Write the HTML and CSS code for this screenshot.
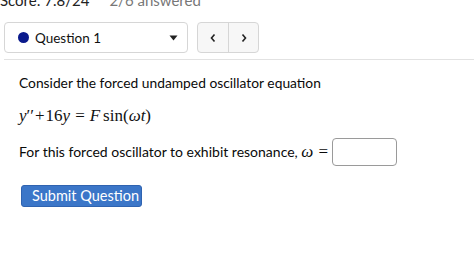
FILE: index.html
```html
<!DOCTYPE html>
<html>
<head>
<meta charset="utf-8">
<link rel="stylesheet" href="styles.css">
</head>
<body>
<div class="score"><span class="score-val">Score: 7.8/24</span><span class="answered">2/6 answered</span></div>
<div class="toolbar">
  <div class="select">
    <span class="dot"></span>
    <span class="qlabel">Question 1</span>
    <svg class="caret" width="9" height="6" viewBox="0 0 9 6"><path d="M0.5 0.5 H8.5 L4.5 5.5 Z" fill="#222"/></svg>
  </div>
  <div class="nav">
    <button class="navbtn" type="button"><svg width="8" height="10" viewBox="0 0 8 10"><path d="M5.5 1.5 L2.5 5 L5.5 8.5" fill="none" stroke="#222" stroke-width="1.6"/></svg></button>
    <button class="navbtn" type="button"><svg width="8" height="10" viewBox="0 0 8 10"><path d="M2.5 1.5 L5.5 5 L2.5 8.5" fill="none" stroke="#222" stroke-width="1.6"/></svg></button>
  </div>
</div>
<div class="rule"></div>
<div class="content">
  <p class="text">Consider the forced undamped oscillator equation</p>
  <p class="math"><i>y</i>′′<span class="op">+</span>16<i>y</i><span class="rel">=</span><i>F</i><span class="fn">sin</span>(<i>ωt</i>)</p>
  <div class="answer-row">
    <span class="text answer-text">For this forced oscillator to exhibit resonance, <span class="math-inline"><i>ω</i><span class="rel">=</span></span></span>
    <span class="input"></span>
  </div>
  <button class="submit" type="button">Submit Question</button>
</div>
</body>
</html>
```
FILE: styles.css
```css
html, body {
  margin: 0;
  padding: 0;
  background: #fff;
  overflow: hidden;
}
body {
  font-family: Lato, "Open Sans", sans-serif;
  color: #111;
  width: 474px;
  height: 270px;
}
.score {
  margin-top: -9px;
  height: 18px;
  font-size: 15px;
  line-height: 18px;
  white-space: nowrap;
}
.score-val {
  color: #222;
}
.answered {
  color: #777;
  margin-left: 20px;
}
.toolbar {
  display: flex;
  align-items: center;
  margin-top: 13px;
  padding-left: 4px;
  gap: 9px;
}
.select {
  box-sizing: border-box;
  width: 184px;
  height: 31px;
  border: 1px solid #d6d6d6;
  border-radius: 4px;
  display: flex;
  align-items: center;
  padding-left: 13px;
  padding-right: 8px;
}
.dot {
  width: 11px;
  height: 11px;
  border-radius: 50%;
  background: #0a1a8c;
  margin-right: 6px;
}
.qlabel {
  font-size: 13.5px;
  color: #111;
  flex: 1;
}
.caret {
  margin-right: 1px;
}
.nav {
  box-sizing: border-box;
  display: flex;
  height: 31px;
  border: 1px solid #d6d6d6;
  border-radius: 4px;
  background: #f7f7f7;
}
.navbtn {
  width: 30px;
  height: 29px;
  border: 0;
  padding: 0;
  background: transparent;
  display: flex;
  align-items: center;
  justify-content: center;
}
.navbtn + .navbtn {
  border-left: 1px solid #d6d6d6;
}
.rule {
  margin: 6px 0 0 4px;
  height: 1px;
  background: #e2e2e2;
}
.content {
  padding-left: 19px;
}
.text {
  font-size: 13.8px;
  color: #0a0a0a;
}
.answer-text {
  font-size: 14px;
}
p.text {
  margin: 14px 0 0 0;
  line-height: 18px;
}
.math {
  margin: 13px 0 0 0;
  font-family: "Liberation Serif", "DejaVu Serif", serif;
  font-size: 17px;
  line-height: 22px;
  color: #111;
}
.math i {
  font-style: italic;
}
.op {
  margin: 0 1px;
}
.rel {
  margin: 0 5px;
}
.fn {
  margin-left: 3px;
}
.math-inline {
  font-family: "Liberation Serif", "DejaVu Serif", serif;
  font-size: 17px;
}
.math-inline .rel {
  margin: 0 4px 0 5px;
}
.answer-row {
  display: flex;
  align-items: center;
  margin-top: 11px;
}
.input {
  box-sizing: border-box;
  width: 65px;
  height: 28px;
  border: 1px solid #9a9a9a;
  border-radius: 4px;
  background: #fff;
}
.submit {
  display: block;
  margin-top: 19px;
  margin-left: 2px;
  width: 121px;
  height: 22px;
  border: 1px solid #2f63b0;
  border-radius: 3px;
  background: #3b76c8;
  color: #fff;
  font-family: Lato, sans-serif;
  font-size: 14.5px;
  padding: 0 0 0 10px;
  text-align: left;
  line-height: 20px;
}
```
